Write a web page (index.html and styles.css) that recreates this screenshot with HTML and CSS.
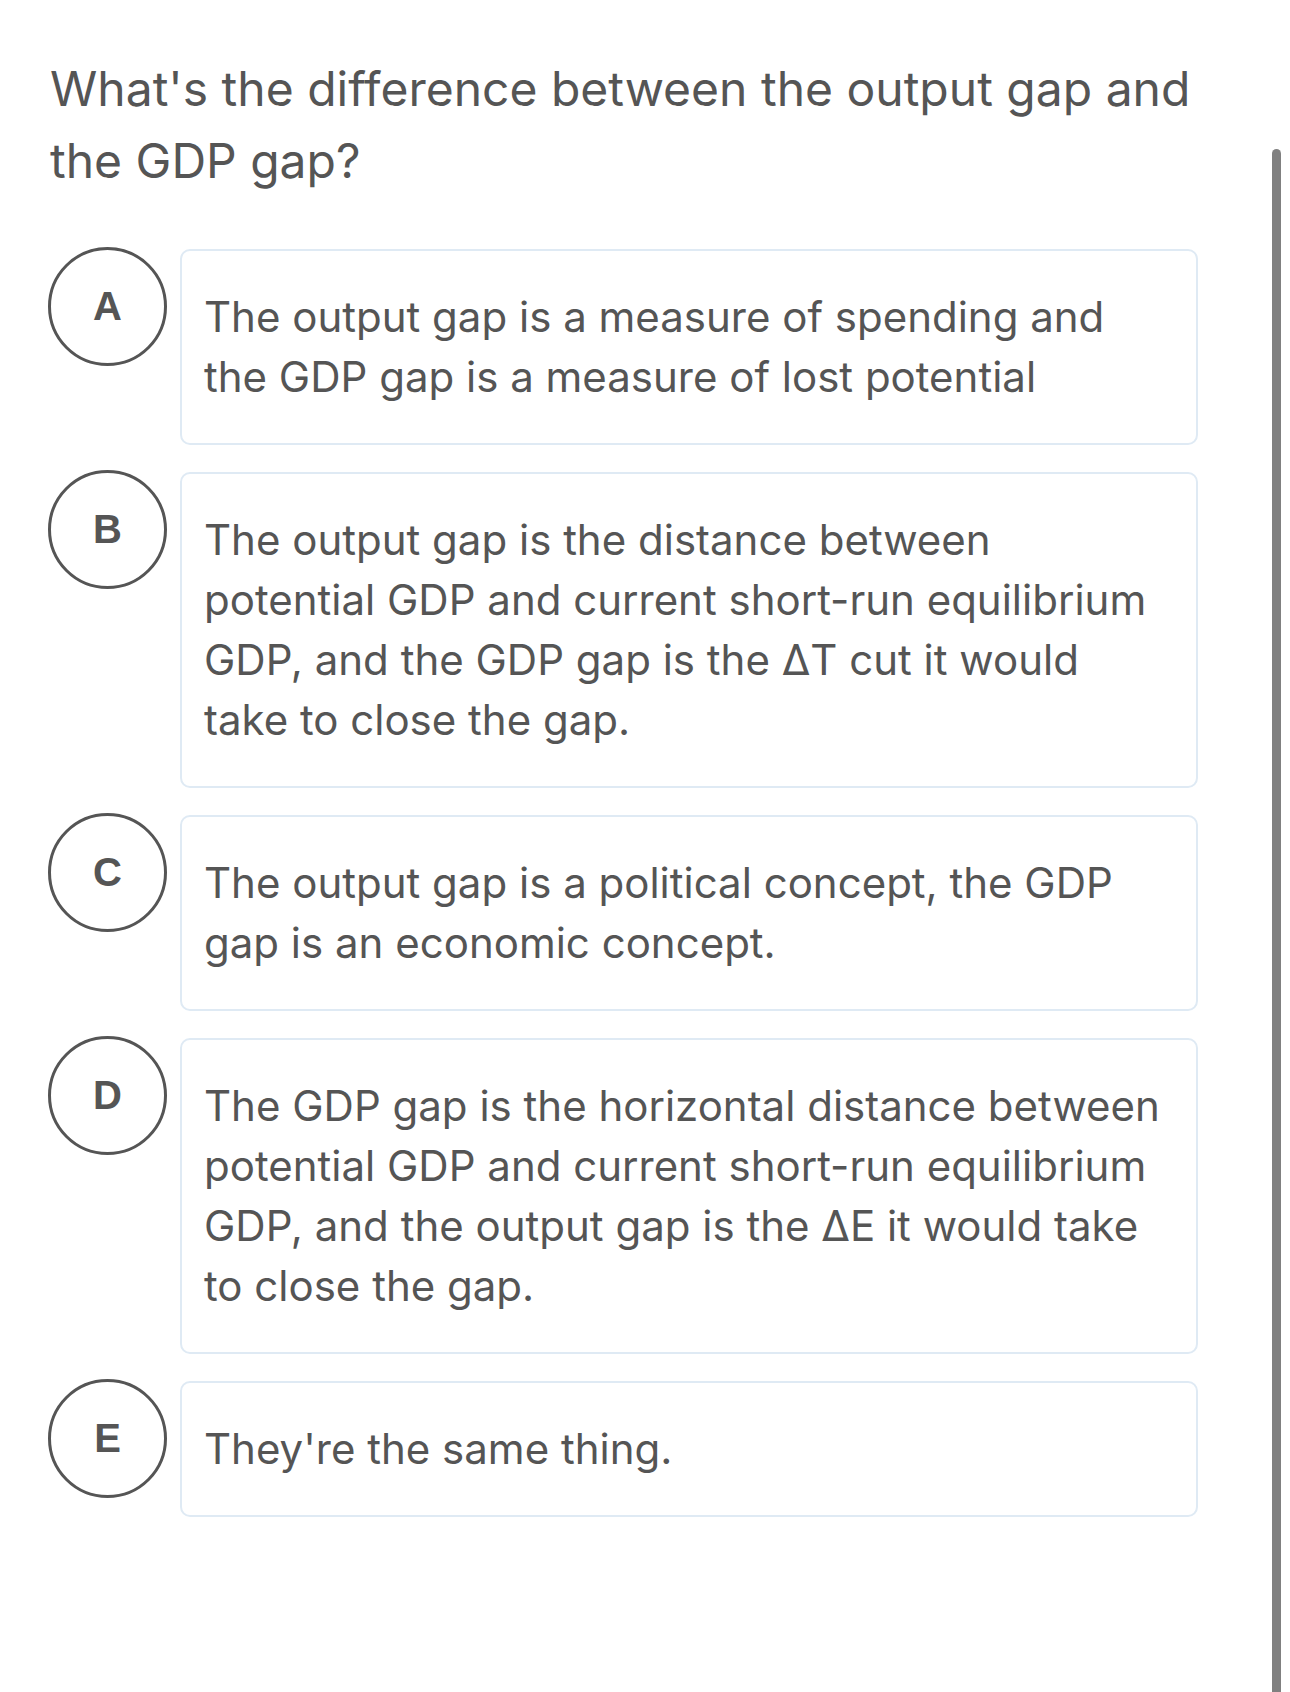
FILE: index.html
```html
<!DOCTYPE html>
<html lang="en">
<head>
  <meta charset="UTF-8">
  <meta name="viewport" content="width=device-width, initial-scale=1.0">
  <title>Question</title>
  <link rel="stylesheet" href="styles.css">
</head>
<body>
  <div class="quiz">
    <h1 class="question">What's the difference between the output gap and the GDP gap?</h1>

    <div class="options">
      <div class="option">
        <div class="letter">A</div>
        <div class="answer">The output gap is a measure of spending and the GDP gap is a measure of lost potential</div>
      </div>
      <div class="option">
        <div class="letter">B</div>
        <div class="answer">The output gap is the distance between potential GDP and current short-run equilibrium GDP, and the GDP gap is the ΔT cut it would take to close the gap.</div>
      </div>
      <div class="option">
        <div class="letter">C</div>
        <div class="answer">The output gap is a political concept, the GDP gap is an economic concept.</div>
      </div>
      <div class="option">
        <div class="letter">D</div>
        <div class="answer">The GDP gap is the horizontal distance between potential GDP and current short-run equilibrium GDP, and the output gap is the ΔE it would take to close the gap.</div>
      </div>
      <div class="option">
        <div class="letter">E</div>
        <div class="answer">They're the same thing.</div>
      </div>
    </div>
  </div>

  <div class="scrollbar"></div>
</body>
</html>
```

FILE: styles.css
```css
body {
  margin: 0;
  background: #fff;
  color: #555;
  font-family: Inter, "Noto Sans", sans-serif;
}

.quiz {
  width: 1150px;
  padding: 53px 0 0 48px;
}

.question {
  margin: 0 -20px 52px 2px;
  font-size: 48px;
  font-weight: 400;
  line-height: 72px;
  color: #555;
}

.options {
  display: flex;
  flex-direction: column;
  gap: 27px;
}

.option {
  display: flex;
  align-items: flex-start;
  gap: 13px;
}

.letter {
  flex: 0 0 119px;
  height: 119px;
  box-sizing: border-box;
  border: 3px solid #555;
  border-radius: 50%;
  display: flex;
  align-items: center;
  justify-content: center;
  font-family: "Liberation Sans", Arial, sans-serif;
  font-weight: 700;
  font-size: 40px;
  color: #555;
  margin-top: -2px;
}

.answer {
  flex: 1;
  border: 2px solid #dfeaf4;
  border-radius: 10px;
  padding: 36px 28px 36px 22px;
  font-size: 42px;
  line-height: 60px;
}

/* overlay scrollbar on the right edge */
.scrollbar {
  position: fixed;
  left: 1272px;
  top: 149px;
  bottom: 0;
  width: 9px;
  background: #808080;
  border-radius: 5px 5px 0 0;
}
```
